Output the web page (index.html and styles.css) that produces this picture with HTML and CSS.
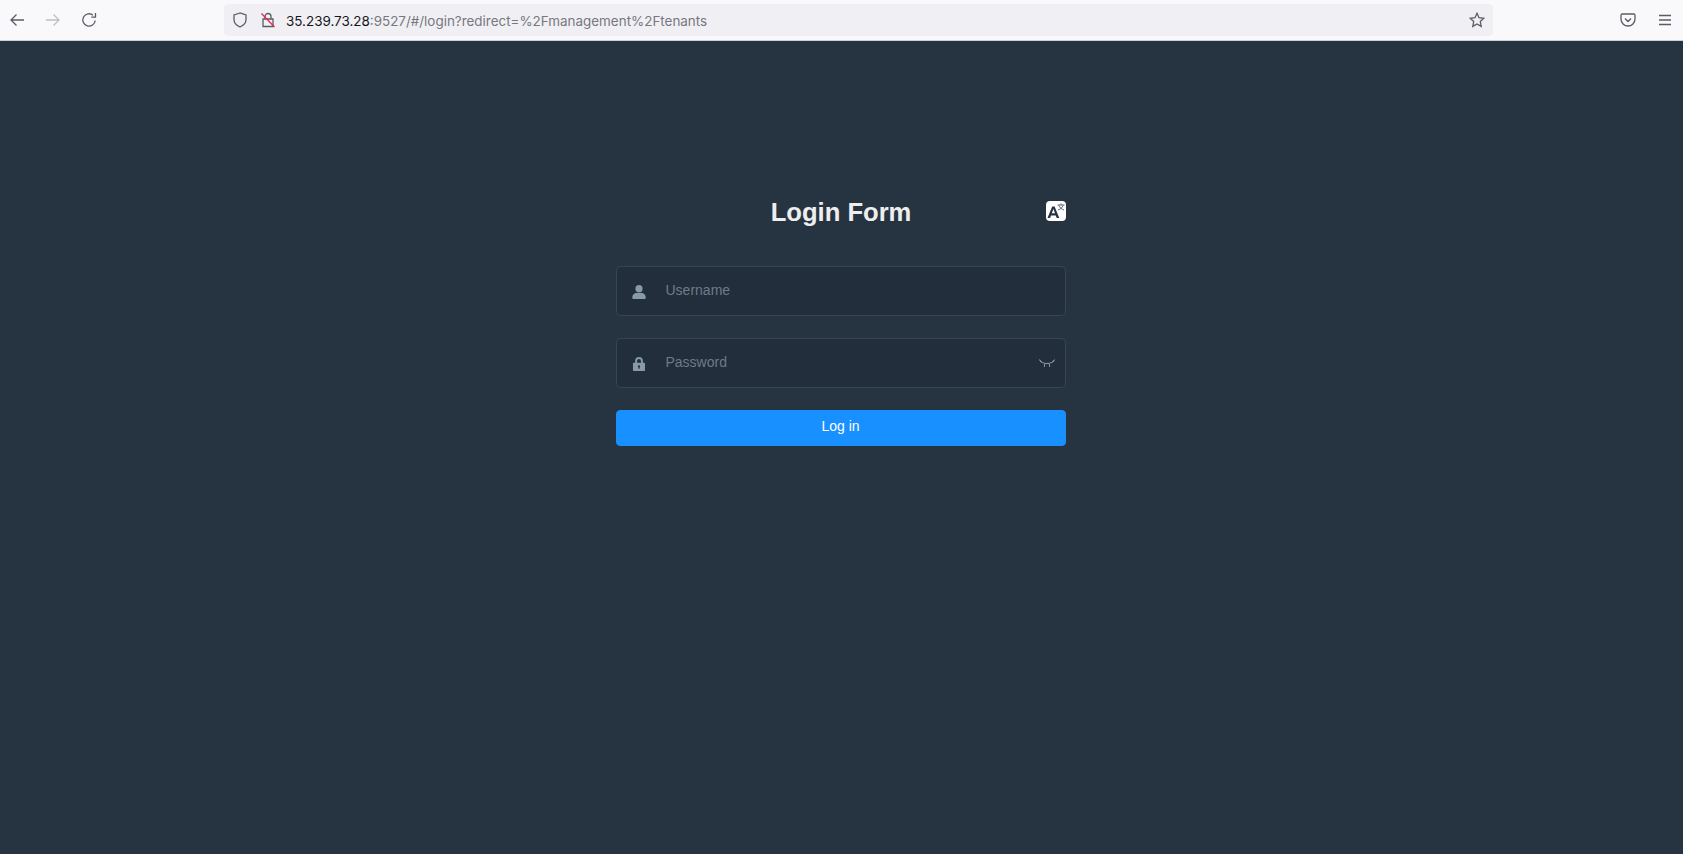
FILE: index.html
```html
<!DOCTYPE html>
<html lang="en">
<head>
<meta charset="utf-8">
<title>Login</title>
<link rel="stylesheet" href="styles.css">
</head>
<body>
<header class="toolbar">
  <div class="nav">
    <svg class="tb-icon" viewBox="0 0 16 16"><path d="M15 8H2M7.500 2.500 2 8l5.500 5.500"/></svg>
    <svg class="tb-icon dim" viewBox="0 0 16 16"><path d="M1 8h13M8.500 2.500 14 8l-5.500 5.500"/></svg>
    <svg class="tb-icon" viewBox="0 0 16 16"><path d="M14.200 8.500A6.200 6.200 0 1 1 12 3.200M14.500 1v4.200h-4.200"/></svg>
  </div>
  <div class="urlbar">
    <svg class="ub-shield" viewBox="0 0 16 16"><path d="M8 1 2 3v4.500c0 3.500 2.500 6 6 7.500 3.500-1.500 6-4 6-7.500V3z"/></svg>
    <svg class="ub-lock" viewBox="0 0 16 16"><path class="lock-body" d="M5 7V4.500a3 3 0 0 1 6 0V7M3 7h10v7.500H3z"/><path class="lock-slash" d="M1.500 1.500l13 13.500"/></svg>
    <div class="url"><span class="host">35.239.73.28</span>:9527/#/login?redirect=%2Fmanagement%2Ftenants</div>
    <svg class="ub-star" viewBox="0 0 16 16"><path d="M8 1.300l2 4.400 4.800.6-3.500 3.300.9 4.800L8 12l-4.200 2.400.9-4.800L1.200 6.300 6 5.700z"/></svg>
  </div>
  <div class="actions">
    <svg class="tb-icon" viewBox="0 0 16 16"><path d="M2.500 2h11A1.500 1.500 0 0 1 15 3.500V7a7 7 0 0 1-14 0V3.500A1.500 1.500 0 0 1 2.500 2zM5 6.500l3 3 3-3"/></svg>
    <svg class="tb-icon" viewBox="0 0 16 16"><path d="M2 3.500h12M2 8h12M2 12.500h12"/></svg>
  </div>
</header>
<main class="login">
  <form class="form">
    <div class="title-row">
      <h1 class="title">Login Form</h1>
      <div class="lang">
        <svg viewBox="0 0 20 20">
          <path class="lang-a" d="M1.500 17 6.200 5.500h2.400L13.300 17h-2.600l-.9-2.500H5l-.9 2.500zM5.800 12.300h3.200L7.400 7.900z"/>
          <path class="lang-x" d="M11.500 4h7M15 2.500V4M12.800 4.300c.8 2.200 2.700 3.800 5.200 4.700M17.200 4.300c-.8 2.200-2.500 3.800-5.200 4.700"/>
        </svg>
      </div>
    </div>
    <div class="field">
      <svg class="field-icon" viewBox="1 .8 14 14.500"><ellipse cx="8" cy="4.700" rx="3.700" ry="3.900"/><path d="M1 14c0-3.500 2.500-5 4-5h6c1.500 0 4 1.500 4 5 0 .8-.4 1.200-1 1.200H2c-.6 0-1-.4-1-1.200z"/></svg>
      <input class="input" type="text" placeholder="Username">
    </div>
    <div class="field">
      <svg class="field-icon" viewBox="1.800 1 12.400 14.400"><path fill-rule="evenodd" d="M4 7V5a4 4 0 0 1 8 0v2h1.500a.7.7 0 0 1 .7.700v7a.7.7 0 0 1-.7.700h-11a.7.7 0 0 1-.7-.700v-7a.7.7 0 0 1 .7-.700zm2 0h4V5a2 2 0 0 0-4 0zm2 2.500a1.200 1.200 0 0 0-.6 2.200V13h1.200v-1.300A1.200 1.200 0 0 0 8 9.500z"/></svg>
      <input class="input" type="password" placeholder="Password">
      <svg class="eye" viewBox="0 0 16 10"><path d="M.5 1.500C4 5.500 12 5.500 15.500 1.500M.5 .5 3 3.500M15.500 .5 13 3.500M5.800 4.500 5.300 8M10.200 4.500 10.700 8"/></svg>
    </div>
    <button class="submit" type="button">Log in</button>
  </form>
</main>
</body>
</html>
```
FILE: styles.css
```css
* { box-sizing: border-box; }
html, body { height: 100%; margin: 0; }
body {
  display: flex;
  flex-direction: column;
  height: 854px;
  overflow: hidden;
  background: #263442;
  font-family: "Liberation Sans", Arial, sans-serif;
}
.toolbar {
  flex: none;
  display: flex;
  align-items: center;
  height: 41px;
  background: #f9f9fb;
  border-bottom: 1px solid #cfcfd8;
  padding-bottom: 1px;
}
.nav {
  display: flex;
  align-items: center;
  gap: 20px;
  width: 224px;
  padding-left: 9px;
}
.tb-icon {
  width: 16px;
  height: 16px;
  fill: none;
  stroke: #5b5b66;
  stroke-width: 1.300;
  flex: none;
}
.tb-icon.dim { stroke: #bdbdc4; }
.urlbar {
  display: flex;
  align-items: center;
  width: 1269px;
  height: 32px;
  background: #f0f0f4;
  border-radius: 4px;
  padding: 0 8px;
}
.ub-shield, .ub-lock, .ub-star {
  flex: none;
  width: 16px;
  height: 16px;
  fill: none;
  stroke: #5b5b66;
  stroke-width: 1.300;
}
.ub-shield { margin-right: 12px; }
.ub-lock { margin-right: 10px; }
.lock-slash { stroke: #e22850; }
.url {
  flex: 1;
  padding-top: 2px;
  font-family: Inter, "Liberation Sans", sans-serif;
  font-size: 13.430px;
  color: #77777f;
  white-space: nowrap;
}
.host { color: #15141a; }
.actions {
  display: flex;
  align-items: center;
  gap: 20px;
  margin-left: auto;
  padding-right: 10px;
}
.actions .tb-icon:first-child { margin-right: 1px; }
.login {
  flex: 1;
  display: flex;
  justify-content: center;
  padding-top: 156px;
}
.form {
  width: 450px;
  margin-right: 1px;
}
.title-row {
  position: relative;
  height: 69px;
}
.title {
  margin: 0;
  font-size: 25.600px;
  line-height: 30px;
  font-weight: 700;
  color: #eeeeee;
  text-align: center;
}
.lang {
  position: absolute;
  top: 4px;
  right: 0;
  width: 20px;
  height: 20px;
  background: #fff;
  border-radius: 4px;
}
.lang svg { display: block; width: 20px; height: 20px; }
.lang-a { fill: #283443; }
.lang-x { fill: none; stroke: #5b6675; stroke-width: 1; }
.field {
  display: flex;
  align-items: center;
  position: relative;
  height: 50px;
  margin-bottom: 22px;
  background: rgba(0, 0, 0, 0.100);
  border: 1px solid rgba(255, 255, 255, 0.100);
  border-radius: 5px;
  padding-left: 15px;
}
.field-icon {
  flex: none;
  width: 14px;
  height: 14px;
  margin-top: 2px;
  fill: #889aa4;
}
.input {
  flex: 1;
  min-width: 0;
  height: 47px;
  margin-left: 5px;
  padding: 0 5px 2px 14.500px;
  background: transparent;
  border: 0;
  outline: 0;
  font: 14px "Liberation Sans", Arial, sans-serif;
  color: #fff;
}
.input::placeholder { color: #6f7b87; opacity: 1; }
.eye {
  position: absolute;
  top: 20px;
  right: 10px;
  width: 16px;
  height: 10px;
  fill: none;
  stroke: #889aa4;
  stroke-width: 1;
}
.submit {
  display: block;
  width: 100%;
  height: 36px;
  padding: 0 1px 5px 0;
  background: #1890ff;
  border: 1px solid #1890ff;
  border-radius: 4px;
  color: #fff;
  font: 14px "Liberation Sans", Arial, sans-serif;
}
```
